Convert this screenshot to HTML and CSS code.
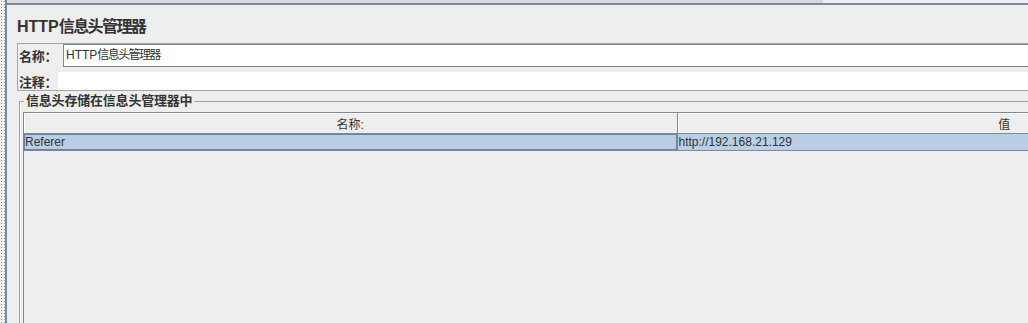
FILE: index.html
```html
<!doctype html>
<html>
<head>
<meta charset="UTF-8">
<title>HTTP信息头管理器</title>
<link rel="stylesheet" href="styles.css">
</head>
<body>
<div class="frame">
	<div class="splitter"></div>
	<div class="main">
		<div class="tabstrip"></div>
		<div class="panel">
			<h1 class="title">HTTP<span class="cjk">信息头管理器</span></h1>

			<div class="namebox">
				<div class="row row_name">
					<span class="label">名称：</span>
					<div class="field">HTTP<span class="cjk">信息头管理器</span></div>
				</div>
				<div class="row row_note">
					<span class="label">注释：</span>
					<div class="field field_plain"></div>
				</div>
			</div>

			<fieldset class="group">
				<legend class="group_title">信息头存储在信息头管理器中</legend>
				<div class="table_scroll">
					<table class="headers">
						<colgroup>
							<col class="col_name">
							<col class="col_value">
						</colgroup>
						<thead>
							<tr>
								<th>名称:</th>
								<th>值</th>
							</tr>
						</thead>
						<tbody>
							<tr class="selected">
								<td class="focus">Referer</td>
								<td>http://192.168.21.129</td>
							</tr>
						</tbody>
					</table>
				</div>
			</fieldset>
		</div>
	</div>
</div>
</body>
</html>
```

FILE: styles.css
```css
body {
	margin: 0;
	background: #eeeeee;
	color: #333333;
	font-family: "Liberation Sans", "Noto Sans CJK SC", sans-serif;
	font-size: 12px;
	overflow: hidden;
}
.frame {
	display: flex;
	height: 323px;
}
.splitter {
	flex: none;
	width: 5px;
	background: #f2f2f2 radial-gradient(circle, #8c8c8c 0.7px, transparent 0.9px) 0 0 / 3px 3px;
}
.main {
	flex: 1;
	min-width: 0;
	display: flex;
	flex-direction: column;
	border-left: 2px solid #7a8a99;
}
.tabstrip {
	flex: none;
	width: 816px;
	height: 3px;
	background: #d9d9d9;
}
.panel {
	flex: 1;
	overflow: hidden;
	padding-left: 10px;
	border-top: 2px solid #7a8a99;
}
.title {
	margin: 12px 0 6px;
	font-size: 16px;
	line-height: 20px;
	font-weight: bold;
}
.title .cjk {
	letter-spacing: -1.6px;
}

/* 名称 / 注释 */
.namebox {
	margin-right: -20px;
	border: 1px solid #a6a6a6;
}
.row {
	display: flex;
	align-items: center;
}
.row_name {
	height: 23px;
	margin-bottom: 5px;
}
.row_note {
	height: 18px;
}
.label {
	flex: none;
	padding-left: 1px;
	font-size: 13px;
	font-weight: bold;
	letter-spacing: -0.3px;
}
.row_name .label {
	width: 44px;
}
.row_note .label {
	width: 39px;
}
.field {
	flex: 1;
	height: 100%;
	box-sizing: border-box;
	padding-left: 2px;
	border: 1px solid #7a8a99;
	background: #fff;
	line-height: 21px;
	white-space: nowrap;
}
.field .cjk {
	letter-spacing: -1.6px;
}
.field_plain {
	border: 0;
}

/* 信息头 */
.group {
	margin: 3px 0 0 2px;
	padding: 4px 0 0 3px;
	border: 0;
	border-top: 1px solid #a3a3a3;
	border-left: 1px solid #a3a3a3;
	box-shadow: inset 1px 0 #fff;
	min-inline-size: 0;
}
.group_title {
	margin-left: 1px;
	padding: 0 2px;
	font-size: 13px;
	line-height: 14px;
	font-weight: bold;
	letter-spacing: -0.2px;
}
.table_scroll {
	height: 220px;
	border-top: 1px solid #7a8a99;
	border-left: 1px solid #7a8a99;
}
.headers {
	width: 1308px;
	table-layout: fixed;
	border-collapse: collapse;
	font-size: 12px;
}
.col_name {
	width: 653px;
}
.headers th {
	height: 20px;
	padding: 0;
	background: #eeeeee;
	font-weight: normal;
	border-right: 1px solid #7a8a99;
	border-bottom: 1px solid #7a8a99;
	box-shadow: inset 1px 1px #fff;
}
.headers td {
	height: 16px;
	padding: 0 1px;
	line-height: 16px;
	white-space: nowrap;
	border-right: 1px solid #7a8a99;
	border-bottom: 1px solid #7a8a99;
}
.selected td {
	background: #b8cfe5;
}
.selected .focus {
	box-shadow: inset 0 0 0 1px #6c7fa3;
}
```
